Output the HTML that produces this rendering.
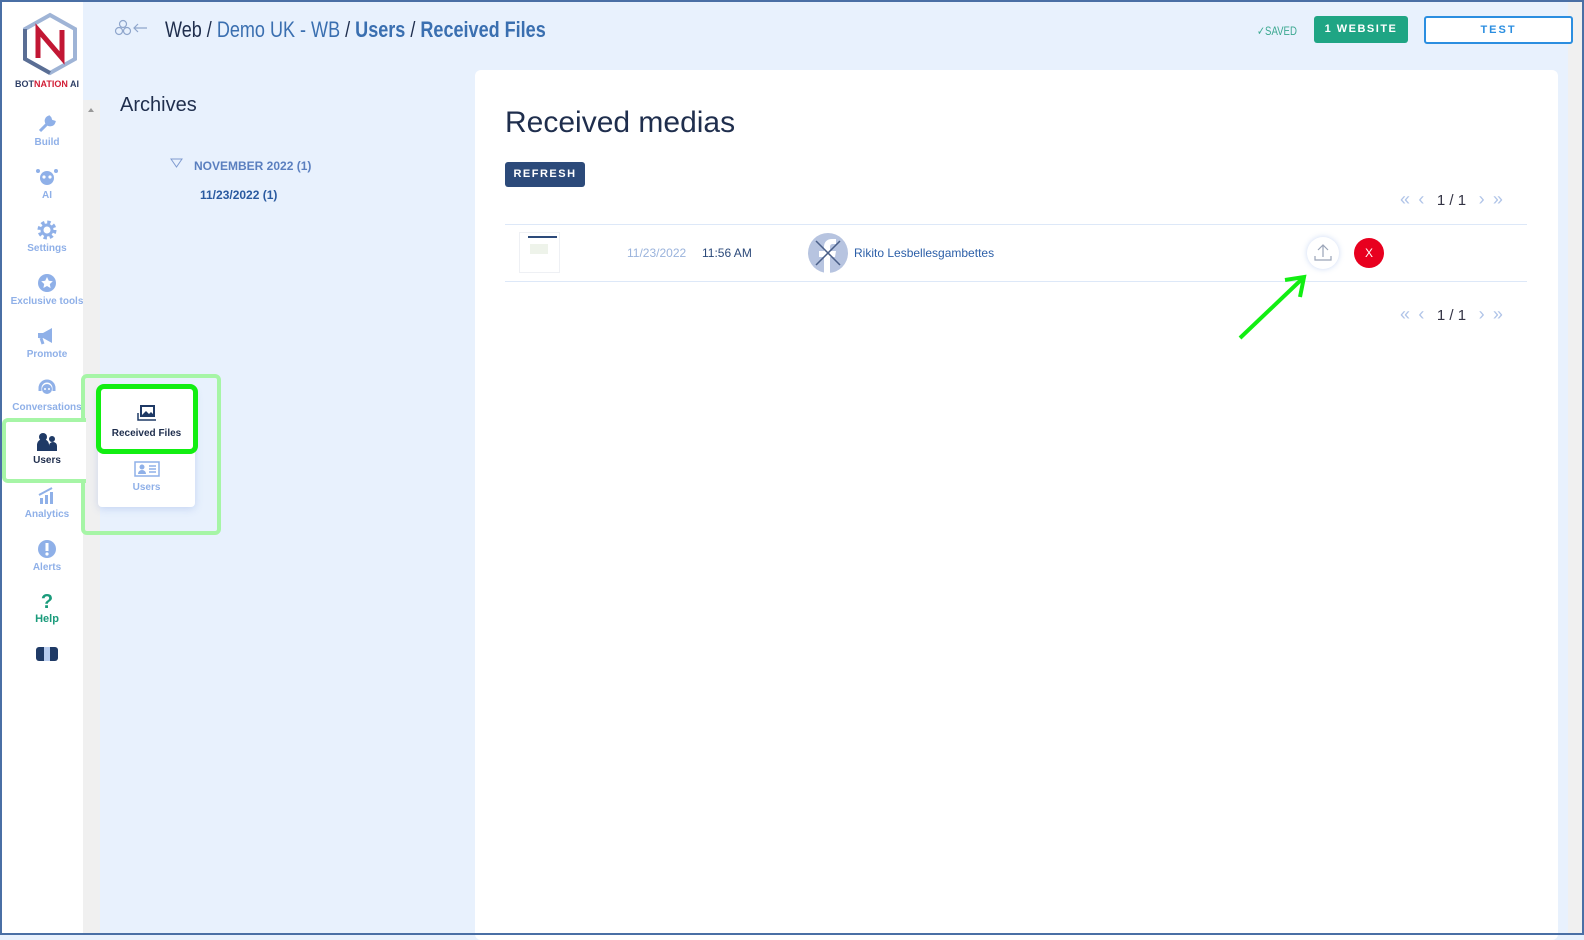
<!DOCTYPE html>
<html><head><meta charset="utf-8">
<style>
*{box-sizing:border-box;margin:0;padding:0}
body{width:1584px;height:935px;overflow:hidden;background:#e8f1fd;font-family:"Liberation Sans",sans-serif;position:relative}
.frame{position:absolute;left:0;top:0;width:1584px;height:935px;border:2px solid #4a6fa5;pointer-events:none;z-index:20}
.side{position:absolute;left:0;top:0;width:83px;height:935px;background:#fff}
.scroll{position:absolute;left:83px;top:100px;width:17px;height:835px;background:#f0f0f0}
.scroll:before{content:"";position:absolute;left:5px;top:5px;border:3px solid transparent;border-bottom:4px solid #999}
.it{position:absolute;left:0;width:94px;text-align:center;font-size:10px;font-weight:bold;color:#8fb0e8}
.it svg{display:block;margin:0 auto 3px}
.abs{position:absolute}
.crumb{position:absolute;left:165px;top:17px;font-size:22px;color:#3a6fb0;transform:scaleX(.82);transform-origin:left;white-space:nowrap}
.card{position:absolute;left:475px;top:70px;width:1083px;height:870px;background:#fff;border-radius:6px}
.pg{position:absolute;font-size:15px;color:#334;width:125px}
.pg span{color:#b0c4e8;font-size:18px}
</style></head><body>
<div class="side"></div>
<div class="scroll"></div>
<div class="abs" style="left:1568px;top:0;width:15px;height:935px;background:#f0f0f0"></div>

<svg class="abs" style="left:20px;top:12px" width="60" height="64" viewBox="0 0 60 64">
<path d="M30 3 L55 17 L55 47 L30 61 L5 47 L5 17 Z" fill="none" stroke="#9fb4d6" stroke-width="4"/>
<path d="M5 17 L5 47 L30 61" fill="none" stroke="#5a6e94" stroke-width="4"/>
<path d="M18 46 V18 L42 46 V18" fill="none" stroke="#c21734" stroke-width="5"/>
</svg>
<div class="abs" style="left:15px;top:79px;font-size:9px;font-weight:bold;color:#2e3f66">BOT<span style="color:#d21e36">NATION</span> AI</div>

<div class="it" style="top:114px">
<svg width="20" height="20" viewBox="0 0 20 20"><path d="M3 17 L11 9 M12 3a4 4 0 1 0 5 5l-3-1-1-3z" stroke="#8fb0e8" stroke-width="3" fill="#8fb0e8"/></svg>Build</div>
<div class="it" style="top:167px">
<svg width="24" height="20" viewBox="0 0 24 20"><circle cx="12" cy="11" r="7" fill="#8fb0e8"/><circle cx="3" cy="4" r="2" fill="#8fb0e8"/><circle cx="21" cy="4" r="2" fill="#8fb0e8"/><circle cx="9" cy="10" r="1.6" fill="#fff"/><circle cx="15" cy="10" r="1.6" fill="#fff"/></svg>AI</div>
<div class="it" style="top:220px">
<svg width="20" height="20" viewBox="0 0 20 20"><circle cx="10" cy="10" r="7" fill="none" stroke="#8fb0e8" stroke-width="5" stroke-dasharray="3 2.5"/><circle cx="10" cy="10" r="5" fill="none" stroke="#8fb0e8" stroke-width="3"/></svg>Settings</div>
<div class="it" style="top:273px">
<svg width="20" height="20" viewBox="0 0 20 20"><circle cx="10" cy="10" r="9" fill="#8fb0e8"/><path d="M10 4l1.8 3.8 4 .5-3 2.8.8 4L10 13l-3.6 2 .8-4-3-2.8 4-.5z" fill="#fff"/></svg>Exclusive tools</div>
<div class="it" style="top:326px">
<svg width="24" height="20" viewBox="0 0 24 20"><path d="M3 7h5l9-5v15l-9-5H3z" fill="#8fb0e8"/><path d="M6 12l2 6" stroke="#8fb0e8" stroke-width="3"/></svg>Promote</div>
<div class="it" style="top:379px">
<svg width="22" height="20" viewBox="0 0 22 20"><path d="M4 12V9a7 7 0 0 1 14 0v3" fill="none" stroke="#8fb0e8" stroke-width="3"/><circle cx="11" cy="10" r="5" fill="#8fb0e8"/><circle cx="9" cy="10" r="1" fill="#fff"/><circle cx="13" cy="10" r="1" fill="#fff"/></svg>Conversations</div>
<div class="abs" style="left:0;top:420px;width:84px;height:62px;background:#fff"></div>
<div class="it" style="top:432px;color:#1f2e4d">
<svg width="22" height="20" viewBox="0 0 22 20"><circle cx="7" cy="5" r="4" fill="#1f3a66"/><path d="M1 19v-6a6 6 0 0 1 12 0v6z" fill="#1f3a66"/><circle cx="16" cy="7" r="3" fill="#1f3a66"/><path d="M13 19v-5a4 4 0 0 1 8 0v5z" fill="#1f3a66"/></svg>Users</div>
<div class="it" style="top:486px">
<svg width="20" height="20" viewBox="0 0 20 20"><rect x="3" y="12" width="3" height="6" fill="#8fb0e8"/><rect x="8" y="9" width="3" height="9" fill="#8fb0e8"/><rect x="13" y="6" width="3" height="12" fill="#8fb0e8"/><path d="M2 9L15 2" stroke="#8fb0e8" stroke-width="2"/></svg>Analytics</div>
<div class="it" style="top:539px">
<svg width="20" height="20" viewBox="0 0 20 20"><circle cx="10" cy="10" r="9" fill="#8fb0e8"/><rect x="8.5" y="4" width="3" height="8" fill="#fff"/><circle cx="10" cy="15" r="1.6" fill="#fff"/></svg>Alerts</div>
<div class="it" style="top:591px;color:#1a9b7b;font-size:11px"><div style="font-size:20px;line-height:22px">?</div>Help</div>
<svg class="abs" style="left:36px;top:647px" width="22" height="14" viewBox="0 0 22 14"><rect x="0" y="0" width="22" height="14" rx="3" fill="#1f3a66"/><rect x="8" y="0" width="6" height="14" fill="#b8cdef"/></svg>

<div class="abs" style="left:98px;top:389px;width:97px;height:118px;background:#fff;border-radius:4px;box-shadow:0 2px 8px rgba(120,150,220,.3)"></div>
<div class="abs" style="left:98px;top:405px;width:97px;text-align:center;font-size:10px;font-weight:bold;color:#1f2e4d">
<svg width="22" height="18" viewBox="0 0 22 18" style="display:block;margin:0 auto 5px"><rect x="5" y="1" width="13" height="10" fill="#fff" stroke="#1f3a66" stroke-width="2"/><path d="M6 10l4-4 3 3 2-2 3 3" fill="#1f3a66"/><path d="M2 8v7h18" fill="none" stroke="#1f3a66" stroke-width="1.5"/></svg>Received Files</div>
<div class="abs" style="left:98px;top:461px;width:97px;text-align:center;font-size:10px;font-weight:bold;color:#8fb0e8">
<svg width="26" height="16" viewBox="0 0 26 16" style="display:block;margin:0 auto 5px"><rect x="1" y="1" width="24" height="14" fill="none" stroke="#8fb0e8" stroke-width="1.5"/><circle cx="8" cy="6" r="2.5" fill="#8fb0e8"/><path d="M4 13a4 4 0 0 1 8 0z" fill="#8fb0e8"/><path d="M15 5h7M15 8h7M15 11h7" stroke="#8fb0e8" stroke-width="1.5"/></svg>Users</div>

<div class="abs" style="left:81px;top:374px;width:140px;height:161px;border:4px solid #a6f5a6;border-radius:6px"></div>
<div class="abs" style="left:2px;top:418px;width:84px;height:65px;border:4px solid #a6f5a6;border-right:none;border-radius:6px 0 0 6px"></div>
<div class="abs" style="left:81px;top:422px;width:5px;height:57px;background:#fff"></div>
<div class="abs" style="left:96px;top:384px;width:102px;height:70px;border:5px solid #12ee12;border-radius:8px"></div>

<svg class="abs" style="left:114px;top:19px" width="36" height="18" viewBox="0 0 36 18"><g fill="none" stroke="#8fa6cc" stroke-width="1.2"><circle cx="9" cy="5" r="3.5"/><circle cx="5" cy="12" r="3.5"/><circle cx="13" cy="12" r="3.5"/><path d="M33 9H20M24 5l-4 4 4 4"/></g></svg>
<div class="crumb"><span style="color:#1f2e4d">Web</span> <span style="color:#1f2e4d">/</span> Demo UK - WB <span style="color:#1f2e4d">/</span> <b>Users</b> <span style="color:#1f2e4d">/</span> <b>Received Files</b></div>
<div class="abs" style="left:1257px;top:24px;font-size:12px;color:#3aa890;transform:scaleX(.8);transform-origin:left">✓SAVED</div>
<div class="abs" style="left:1314px;top:16px;width:94px;height:27px;background:#1fa584;border-radius:3px;color:#fff;font-size:11px;font-weight:bold;letter-spacing:1.5px;text-align:center;line-height:27px">1 WEBSITE</div>
<div class="abs" style="left:1424px;top:16px;width:149px;height:28px;background:#fff;border:2px solid #2b8ee0;border-radius:3px;color:#2b8ee0;font-size:11px;font-weight:bold;letter-spacing:2px;text-align:center;line-height:24px">TEST</div>

<div class="abs" style="left:120px;top:94px;font-size:20px;color:#1f2e4d">Archives</div>
<svg class="abs" style="left:170px;top:158px" width="13" height="10" viewBox="0 0 13 10"><path d="M1 1h11L6.5 9z" fill="none" stroke="#7f9bd0"/></svg>
<div class="abs" style="left:194px;top:159px;font-size:12px;font-weight:bold;color:#5a7fbf">NOVEMBER 2022 (1)</div>
<div class="abs" style="left:200px;top:188px;font-size:12px;font-weight:bold;color:#2a5aa0">11/23/2022 (1)</div>

<div class="card"></div>
<div class="abs" style="left:505px;top:106px;font-size:30px;color:#1f2e4d">Received medias</div>
<div class="abs" style="left:505px;top:162px;width:80px;height:25px;background:#2c4a7a;border-radius:3px;color:#fff;font-size:11px;font-weight:bold;letter-spacing:1.5px;text-align:center;line-height:25px">REFRESH</div>
<div class="pg" style="left:1400px;top:189px"><span>«</span>&nbsp;&nbsp;<span>‹</span>&nbsp;&nbsp; 1 / 1 &nbsp;&nbsp;<span>›</span>&nbsp;&nbsp;<span>»</span></div>
<div class="abs" style="left:505px;top:224px;width:1022px;height:1px;background:#dde8f8"></div>
<div class="abs" style="left:505px;top:281px;width:1022px;height:1px;background:#dde8f8"></div>
<div class="abs" style="left:519px;top:232px;width:41px;height:41px;border:1px solid #eef0f4;background:#fff">
<div style="margin:3px 2px 0 8px;height:2px;background:#2c4a7a"></div>
<div style="margin:6px 0 0 10px;width:18px;height:10px;background:#eef3ea"></div></div>
<div class="abs" style="left:627px;top:246px;font-size:12px;color:#9ab3dc">11/23/2022</div>
<div class="abs" style="left:702px;top:246px;font-size:12px;color:#2c4a7a">11:56 AM</div>
<svg class="abs" style="left:808px;top:233px" width="40" height="40" viewBox="0 0 40 40"><circle cx="20" cy="20" r="20" fill="#b7c4e0"/><path d="M22 40V24h5l1-6h-6v-4c0-2 1-3 3-3h3V6h-4c-5 0-8 3-8 8v4h-5v6h5v16z" fill="#fff"/><path d="M8 8l24 24M32 8L8 32" stroke="#4a5f88" stroke-width="1.5"/></svg>
<div class="abs" style="left:854px;top:246px;font-size:12px;color:#2c5fa8">Rikito Lesbellesgambettes</div>
<div class="abs" style="left:1307px;top:237px;width:32px;height:32px;border-radius:50%;background:#fff;box-shadow:0 0 6px rgba(140,170,230,.45)"></div>
<svg class="abs" style="left:1313px;top:242px" width="20" height="20" viewBox="0 0 20 20"><path d="M10 15V3M5 8l5-5 5 5M2 14v4h16v-4" fill="none" stroke="#9aa4b8" stroke-width="1.2"/></svg>
<div class="abs" style="left:1354px;top:238px;width:30px;height:30px;border-radius:50%;background:#e8001f;color:#fff;font-size:12px;text-align:center;line-height:30px">X</div>
<div class="pg" style="left:1400px;top:304px"><span>«</span>&nbsp;&nbsp;<span>‹</span>&nbsp;&nbsp; 1 / 1 &nbsp;&nbsp;<span>›</span>&nbsp;&nbsp;<span>»</span></div>

<svg class="abs" style="left:1230px;top:270px" width="85" height="75" viewBox="0 0 85 75"><path d="M10 68L72 9" stroke="#12ee12" stroke-width="4"/><path d="M55 10L74 7L70 27" fill="none" stroke="#12ee12" stroke-width="4"/></svg>

<div class="frame"></div>
</body></html>
